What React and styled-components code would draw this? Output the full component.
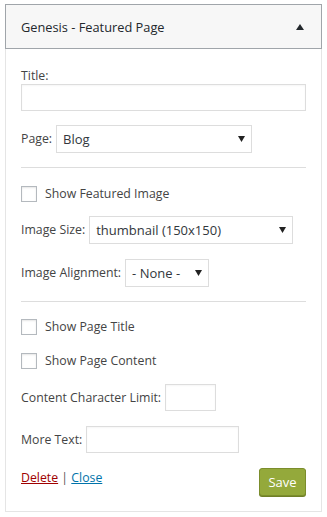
import React from "react";
import styled, { createGlobalStyle } from "styled-components";

const GlobalStyle = createGlobalStyle`
  body {
    margin: 0;
    background: #ffffff;
    font-family: "Open Sans", "Noto Sans", sans-serif;
    color: #444444;
  }
`;

const Widget = styled.div`
  width: 317px;
  margin: 4px 0 0 5px;
  box-sizing: border-box;
`;

const Header = styled.div`
  height: 45px;
  box-sizing: border-box;
  border: 1px solid #a0a5aa;
  background: #f7f7f7;
  display: flex;
  align-items: center;
  justify-content: space-between;
  padding: 0 17px 0 15px;
  font-size: 12.8px;
  color: #23282d;
`;

const Body = styled.div`
  border: 1px solid #e5e5e5;
  border-top: none;
  padding: 19px 15px 15px;
  font-size: 12.3px;
`;

const Label = styled.div`
  line-height: 16px;
`;

const TextInput = styled.div`
  box-sizing: border-box;
  height: 27px;
  width: ${(p) => p.w || "100%"};
  border: 1px solid #dddddd;
  background: #fff;
  box-shadow: inset 0 1px 2px rgba(0, 0, 0, 0.04);
`;

const Row = styled.div`
  display: flex;
  align-items: center;
  gap: ${(p) => p.gap || 4}px;
  margin-top: ${(p) => p.mt || 0}px;
  line-height: 16px;
`;

const Select = styled.div`
  box-sizing: border-box;
  height: 28px;
  width: ${(p) => p.w}px;
  border: 1px solid #dddddd;
  background: #fff;
  display: flex;
  align-items: center;
  justify-content: space-between;
  padding: 0 6px 0 6px;
  font-size: 13px;
  color: #32373c;
`;

const Rule = styled.div`
  height: 1px;
  background: #dddddd;
  margin-top: ${(p) => p.mt}px;
`;

const Box = styled.span`
  width: 16px;
  height: 16px;
  box-sizing: border-box;
  border: 1px solid #b4b9be;
  background: #fff;
  box-shadow: inset 0 1px 2px rgba(0, 0, 0, 0.1);
`;

const Footer = styled.div`
  display: flex;
  justify-content: space-between;
  align-items: flex-start;
  margin-top: 15px;
`;

const Links = styled.div`
  line-height: 20px;
  font-size: 12.3px;
  color: #555;
`;

const Link = styled.a`
  color: ${(p) => (p.danger ? "#a00000" : "#0073aa")};
  text-decoration: underline;
  cursor: pointer;
`;

const SaveButton = styled.button`
  width: 47px;
  height: 28px;
  border: 1px solid #7b8d2c;
  border-radius: 3px;
  background: #94a93b;
  color: #fff;
  font-family: inherit;
  font-size: 13px;
  padding: 0;
  box-shadow: 0 1px 0 #6f7f27;
`;

const Arrow = () => (
  <svg width="7" height="6" viewBox="0 0 7 6">
    <path d="M0 0 H7 L3.5 6 Z" fill="#222" />
  </svg>
);

const UpArrow = () => (
  <svg width="8" height="6" viewBox="0 0 8 6">
    <path d="M0 6 H8 L4 0 Z" fill="#23282d" />
  </svg>
);

const Check = ({ label, mt }) => (
  <Row mt={mt} gap={8}>
    <Box />
    <span>{label}</span>
  </Row>
);

const App = () => {
  return (
    <>
      <GlobalStyle />
      <Widget>
        <Header>
          <span>Genesis - Featured Page</span>
          <UpArrow />
        </Header>
        <Body>
          <Label>Title:</Label>
          <TextInput />
          <Row mt={14}>
            <span>Page:</span>
            <Select w={196}>
              <span>Blog</span>
              <Arrow />
            </Select>
          </Row>
          <Rule mt={14} />
          <Check mt={18} label="Show Featured Image" />
          <Row mt={14}>
            <span>Image Size:</span>
            <Select w={204}>
              <span>thumbnail (150x150)</span>
              <Arrow />
            </Select>
          </Row>
          <Row mt={15}>
            <span>Image Alignment:</span>
            <Select w={84}>
              <span>- None -</span>
              <Arrow />
            </Select>
          </Row>
          <Rule mt={14} />
          <Check mt={17} label="Show Page Title" />
          <Check mt={18} label="Show Page Content" />
          <Row mt={15}>
            <span>Content Character Limit:</span>
            <TextInput w="51px" />
          </Row>
          <Row mt={15}>
            <span>More Text:</span>
            <TextInput w="153px" />
          </Row>
          <Footer>
            <Links>
              <Link danger>Delete</Link> | <Link>Close</Link>
            </Links>
            <SaveButton>Save</SaveButton>
          </Footer>
        </Body>
      </Widget>
    </>
  );
};

export default App;
